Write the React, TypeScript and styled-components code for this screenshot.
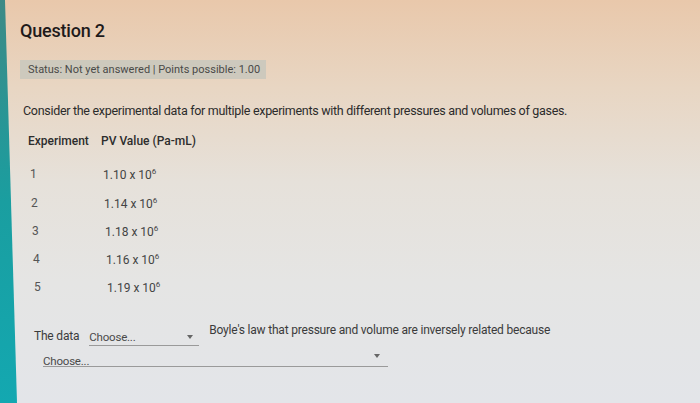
import styled, { createGlobalStyle } from 'styled-components';

const GlobalStyle = createGlobalStyle`
  html, body {
    margin: 0;
    padding: 0;
  }
  body {
    font-family: Roboto, "Liberation Sans", Arial, sans-serif;
    color: #333;
  }
`;

type Row = { id: number; value: string; shift: number };

const rows: Row[] = [
  { id: 1, value: '1.10', shift: 0 },
  { id: 2, value: '1.14', shift: 1 },
  { id: 3, value: '1.18', shift: 2 },
  { id: 4, value: '1.16', shift: 3 },
  { id: 5, value: '1.19', shift: 4 },
];

const Screen = styled.div`
  width: 700px;
  height: 403px;
  overflow: hidden;
  display: flex;
  background: linear-gradient(
    180deg,
    #e9c8ab 0%,
    #e8d6c3 22%,
    #e6e1da 45%,
    #e5e5e4 70%,
    #e3e5e9 100%
  );
`;

// teal sidebar edge, wider at the bottom because of the photo angle
const Edge = styled.div`
  width: 17px;
  flex: none;
  background: linear-gradient(180deg, #3d8a86 0%, #1a9ea0 50%, #13a8b1 100%);
  clip-path: polygon(0 0, 5px 0, 17px 100%, 0 100%);
`;

const Content = styled.div`
  flex: 1;
  padding: 20px 0 0 3px;
  display: flex;
  flex-direction: column;
`;

const Title = styled.h2`
  margin: 0;
  font-size: 18px;
  font-weight: 500;
  color: #1e1a1a;
  letter-spacing: -0.2px;
`;

const StatusBar = styled.div`
  margin-top: 19px;
  width: 238px;
  height: 19px;
  padding-left: 8px;
  display: flex;
  align-items: center;
  background: #cdc9bd;
  font-size: 11px;
  color: #4a4a48;
`;

const Prompt = styled.p`
  margin: 24px 0 0 3px;
  font-size: 12.5px;
  color: #2b2b2b;
  letter-spacing: -0.3px;
  white-space: nowrap;
`;

const Table = styled.div`
  margin: 16px 0 0 8px;
  display: grid;
  grid-template-columns: 73px auto;
  row-gap: 13.3px;
`;

const HeadCell = styled.div`
  font-size: 12px;
  font-weight: 500;
  color: #2d2d2d;
  margin-bottom: 6px;
`;

const NumCell = styled.div<{ $shift: number }>`
  font-size: 12px;
  color: #555;
  padding-left: ${(p) => 2 + p.$shift}px;
  height: 15px;
`;

const ValueCell = styled(NumCell)`
  color: #444;
  sup {
    font-size: 8px;
    vertical-align: 5px;
  }
`;

const Sentence = styled.div`
  margin: 28px 0 0 14px;
  display: flex;
  align-items: flex-start;
  font-size: 12px;
  color: #3b3b3b;
  letter-spacing: -0.2px;
`;

const Lead = styled.span`
  padding-top: 6px;
`;

const Select = styled.div<{ $width: number }>`
  width: ${(p) => p.$width}px;
  display: flex;
  justify-content: space-between;
  border-bottom: 1px solid #9a9a9a;
  font-size: 11.5px;
  color: #4a4a4a;
  letter-spacing: -0.2px;
`;

const InlineSelect = styled(Select)`
  margin: 0 10px 0 10px;
  height: 16px;
  padding-top: 6px;
  padding-right: 6px;
  align-items: center;
`;

const BlockSelect = styled(Select)`
  margin: 3px 0 0 23px;
  height: 17px;
  padding-right: 8px;
  align-items: flex-start;
`;

const Caret = styled.span`
  width: 0;
  height: 0;
  border-left: 3px solid transparent;
  border-right: 3px solid transparent;
  border-top: 4px solid #666;
`;

const BlockCaret = styled(Caret)`
  margin-top: 5px;
`;

const BlockLabel = styled.span`
  padding-top: 6px;
  line-height: 12px;
`;

export default function App() {
  return (
    <>
      <GlobalStyle />
      <Screen>
        <Edge />
        <Content>
          <Title>Question 2</Title>
          <StatusBar>Status: Not yet answered | Points possible: 1.00</StatusBar>
          <Prompt>
            Consider the experimental data for multiple experiments with different pressures and volumes of gases.
          </Prompt>
          <Table>
            <HeadCell>Experiment</HeadCell>
            <HeadCell>PV Value (Pa-mL)</HeadCell>
            {rows.map((r) => (
              <>
                <NumCell key={`n${r.id}`} $shift={r.shift}>
                  {r.id}
                </NumCell>
                <ValueCell key={`v${r.id}`} $shift={r.shift}>
                  {r.value} x 10<sup>6</sup>
                </ValueCell>
              </>
            ))}
          </Table>
          <Sentence>
            <Lead>The data</Lead>
            <InlineSelect $width={104}>
              <span>Choose...</span>
              <Caret />
            </InlineSelect>
            <span>Boyle's law that pressure and volume are inversely related because</span>
          </Sentence>
          <BlockSelect $width={337}>
            <BlockLabel>Choose...</BlockLabel>
            <BlockCaret />
          </BlockSelect>
        </Content>
      </Screen>
    </>
  );
}
